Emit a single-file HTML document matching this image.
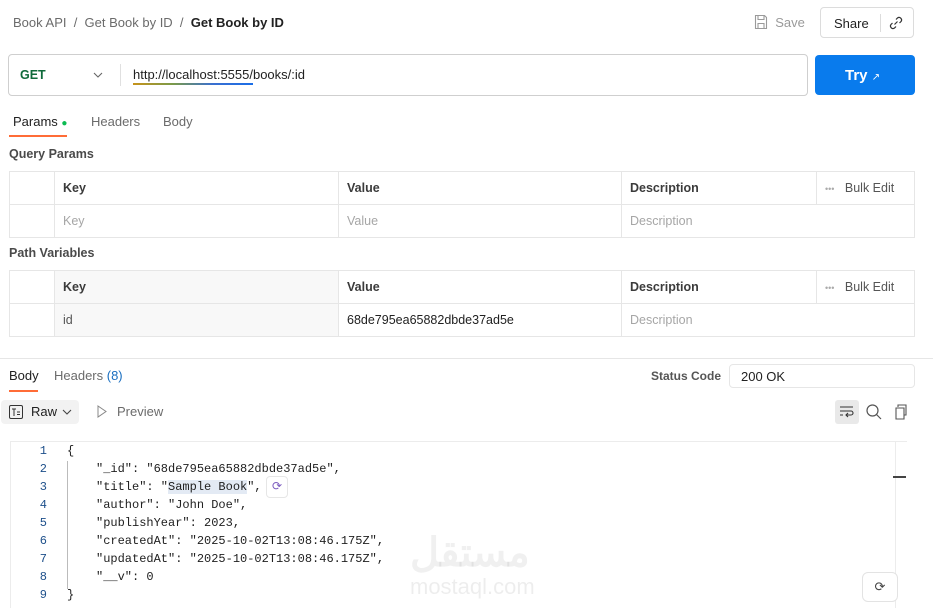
<!DOCTYPE html>
<html><head><meta charset="utf-8"><style>
*{box-sizing:border-box;margin:0;padding:0}
body{width:933px;height:608px;overflow:hidden;background:#fff;font-family:"Liberation Sans",sans-serif;font-size:13px;color:#212121;position:relative}
.a{position:absolute;white-space:nowrap}
.g{color:#6b6b6b}
.l{color:#a6a6a6}
table{position:absolute;left:9px;width:906px;border-collapse:collapse;table-layout:fixed}
td{border:1px solid #e6e6e6;height:33px;padding:0 8px;font-size:12.5px}
.h td{font-weight:bold;color:#3b3b3b}
.code{position:absolute;left:10px;top:441px;width:897px;height:167px;border-top:1px solid #ececec;border-left:1px solid #ececec;font-family:"Liberation Mono",monospace;font-size:12px;color:#212121}
.ln{position:absolute;left:0;width:36px;text-align:right;color:#1d4f8a}
.cl{position:absolute;left:56px}
</style></head><body>
<div class="a g" style="left:13px;top:15px">Book API &nbsp;/&nbsp; Get Book by ID &nbsp;/&nbsp; <b style="color:#212121">Get Book by ID</b></div>
<div class="a" style="left:754px;top:14px;color:#9a9a9a"><svg width="14" height="16" viewBox="0 0 14 16" style="vertical-align:-3px"><path d="M1.5 1.5h9l2 2v11h-11z M4 1.5v4h6v-4 M4 14.5v-5h6v5" fill="none" stroke="#9a9a9a" stroke-width="1.1"/></svg> &nbsp;Save</div>
<div class="a" style="left:820px;top:7px;width:94px;height:31px;border:1px solid #dcdcdc;border-radius:4px"><span class="a" style="left:13px;top:8px">Share</span><span class="a" style="left:59px;top:6px;height:18px;border-left:1px solid #dcdcdc"></span><svg class="a" style="left:67px;top:7px" width="16" height="16" viewBox="0 0 16 16"><path d="M6.5 9.5l3-3M8 4.5l1.5-1.5a2.5 2.5 0 013.5 3.5L11.5 8M8 11.5L6.5 13a2.5 2.5 0 01-3.5-3.5L4.5 8" fill="none" stroke="#333" stroke-width="1.2"/></svg></div>
<div class="a" style="left:8px;top:54px;width:800px;height:42px;border:1px solid #cfcfcf;border-radius:4px">
<b class="a" style="left:11px;top:13px;color:#0f6a3a;font-size:12.5px">GET</b>
<svg class="a" style="left:84px;top:16px" width="10" height="8"><path d="M1 2l4 4 4-4" fill="none" stroke="#666" stroke-width="1.1"/></svg>
<span class="a" style="left:111px;top:9px;height:22px;border-left:1px solid #e0e0e0"></span>
<span class="a" style="left:124px;top:12px">http://localhost:5555/books/:id</span>
<span class="a" style="left:124px;top:28px;width:120px;height:2px;background:linear-gradient(90deg,#c7931a,#7a9a4a,#3a6fd0,#1a6ee8)"></span>
</div>
<div class="a" style="left:815px;top:55px;width:100px;height:40px;background:#097bed;border-radius:4px;color:#fff;font-weight:bold;font-size:15px;padding:12px 0 0 30px">Try <span style="font-size:10px;font-weight:normal">↗</span></div>
<div class="a" style="left:13px;top:114px">Params <span style="color:#0cbb52;font-size:10px">●</span></div>
<div class="a" style="left:9px;top:135px;width:58px;height:2px;background:#ff6c37"></div>
<div class="a g" style="left:91px;top:114px">Headers</div>
<div class="a g" style="left:163px;top:114px">Body</div>
<div class="a" style="left:9px;top:147px;font-weight:bold;color:#4a4a4a;font-size:12.5px">Query Params</div>
<table style="top:171px"><colgroup><col style="width:45px"><col style="width:284px"><col style="width:283px"><col style="width:195px"><col></colgroup>
<tr class="h"><td></td><td>Key</td><td>Value</td><td>Description</td><td style="font-weight:normal;color:#555;border-left:1px solid #e6e6e6"><span style="color:#aaa;font-size:9px">•••</span> &nbsp; Bulk Edit</td></tr>
<tr class="l"><td></td><td>Key</td><td>Value</td><td colspan="2">Description</td></tr></table>
<div class="a" style="left:9px;top:246px;font-weight:bold;color:#4a4a4a;font-size:12.5px">Path Variables</div>
<table style="top:270px"><colgroup><col style="width:45px"><col style="width:284px"><col style="width:283px"><col style="width:195px"><col></colgroup>
<tr class="h"><td></td><td style="background:#f8f8f8">Key</td><td>Value</td><td>Description</td><td style="font-weight:normal;color:#555"><span style="color:#aaa;font-size:9px">•••</span> &nbsp; Bulk Edit</td></tr>
<tr><td></td><td style="background:#f8f8f8;color:#555">id</td><td>68de795ea65882dbde37ad5e</td><td colspan="2" class="l">Description</td></tr></table>
<div class="a" style="left:0;top:358px;width:933px;border-top:1px solid #e6e6e6"></div>
<div class="a" style="left:9px;top:368px">Body</div>
<div class="a" style="left:9px;top:390px;width:29px;height:2px;background:#ff6c37"></div>
<div class="a g" style="left:54px;top:368px">Headers <span style="color:#1a6fc0">(8)</span></div>
<div class="a" style="left:651px;top:369px;font-size:12px;font-weight:bold;color:#555">Status Code</div>
<div class="a" style="left:729px;top:364px;width:186px;height:24px;border:1px solid #e6e6e6;border-radius:4px;padding:4px 0 0 11px">200 OK</div>
<div class="a" style="left:1px;top:400px;width:78px;height:24px;background:#f2f2f2;border-radius:4px"></div>
<svg class="a" style="left:9px;top:405px" width="14" height="14"><rect x=".5" y=".5" width="13" height="13" rx="1.5" fill="none" stroke="#333"/><path d="M3 4h4M5 4v7M8 7h3M8 9.5h3" stroke="#333"/></svg>
<div class="a" style="left:31px;top:404px">Raw</div>
<svg class="a" style="left:62px;top:409px" width="10" height="7"><path d="M1 1l4 4 4-4" fill="none" stroke="#444" stroke-width="1.1"/></svg>
<svg class="a" style="left:97px;top:405px" width="10" height="13"><path d="M1 1l8 5.5-8 5.5z" fill="none" stroke="#888"/></svg>
<div class="a g" style="left:117px;top:404px">Preview</div>
<div class="a" style="left:835px;top:400px;width:24px;height:24px;background:#e9e9e9;border-radius:3px"></div>
<svg class="a" style="left:839px;top:405px" width="16" height="14"><path d="M1 2h13M1 6h11a2 2 0 010 4H7M9 8l-2 2 2 2M1 10h3" fill="none" stroke="#333" stroke-width="1.1"/></svg>
<svg class="a" style="left:866px;top:404px" width="16" height="16"><circle cx="6.5" cy="6.5" r="5.5" fill="none" stroke="#555" stroke-width="1.2"/><path d="M10.5 10.5l4.5 4.5" stroke="#555" stroke-width="1.2"/></svg>
<svg class="a" style="left:895px;top:404px" width="14" height="16"><path d="M3 3V1h8v10H9M1 4h8v11H1z" fill="none" stroke="#555" stroke-width="1.1"/></svg>
<div class="code">
<div class="a" style="left:56px;top:19px;height:128px;border-left:1px solid #bbb"></div>
<div class="ln" style="top:2px">1</div><div class="cl" style="top:2px">{</div>
<div class="ln" style="top:20px">2</div><div class="cl" style="top:20px;left:85px">"_id": "68de795ea65882dbde37ad5e",</div>
<div class="ln" style="top:38px">3</div><div class="cl" style="top:38px;left:85px">"title": "<span style="background:#e3eaf4">Sample Book</span>",</div>
<div class="a" style="left:255px;top:34px;width:22px;height:22px;border:1px solid #e6e6e6;border-radius:4px;color:#7b5bbf;text-align:center;line-height:20px;font-size:12px">⟳</div>
<div class="ln" style="top:56px">4</div><div class="cl" style="top:56px;left:85px">"author": "John Doe",</div>
<div class="ln" style="top:74px">5</div><div class="cl" style="top:74px;left:85px">"publishYear": 2023,</div>
<div class="ln" style="top:92px">6</div><div class="cl" style="top:92px;left:85px">"createdAt": "2025-10-02T13:08:46.175Z",</div>
<div class="ln" style="top:110px">7</div><div class="cl" style="top:110px;left:85px">"updatedAt": "2025-10-02T13:08:46.175Z",</div>
<div class="ln" style="top:128px">8</div><div class="cl" style="top:128px;left:85px">"__v": 0</div>
<div class="ln" style="top:146px">9</div><div class="cl" style="top:146px">}</div>
</div>
<div class="a" style="left:895px;top:441px;height:167px;border-left:1px solid #ececec"></div>
<div class="a" style="left:893px;top:476px;width:13px;height:2px;background:#444"></div>
<div class="a" style="left:862px;top:572px;width:36px;height:30px;border:1px solid #e3e3e3;border-radius:6px;background:#fff;text-align:center;line-height:28px;color:#444">⟳</div>
<div class="a" style="left:410px;top:530px;font-size:40px;font-weight:bold;color:rgba(0,0,0,.06);font-family:'Liberation Sans',sans-serif">مستقل</div>
<div class="a" style="left:410px;top:574px;font-size:22px;color:rgba(0,0,0,.07)">mostaql.com</div>
</body></html>
